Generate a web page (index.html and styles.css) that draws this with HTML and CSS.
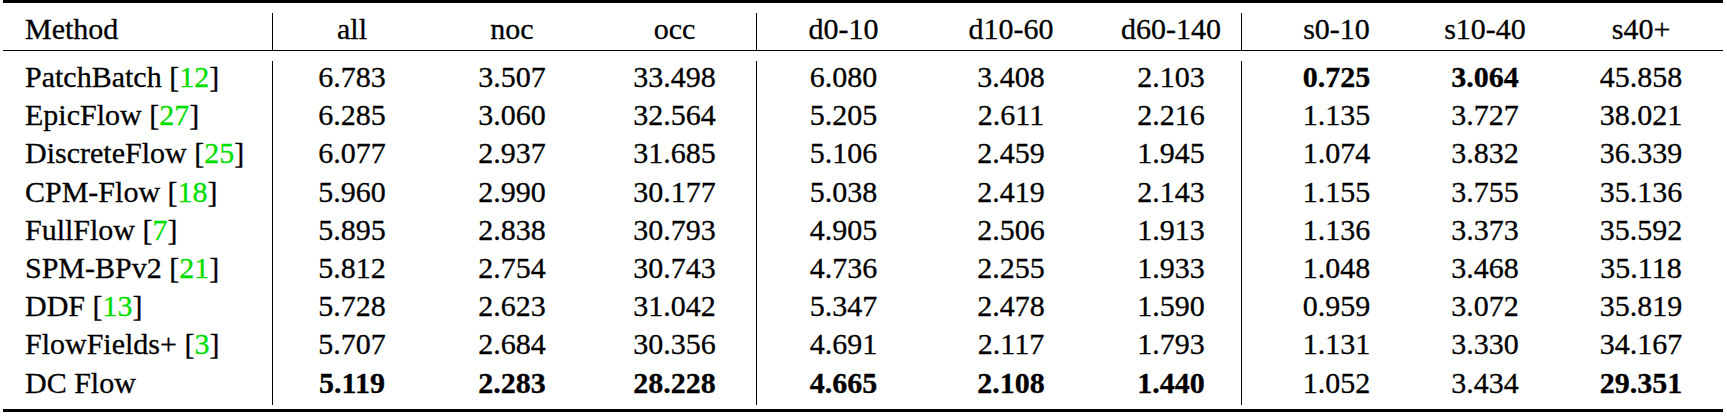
FILE: index.html
```html
<!DOCTYPE html>
<html>
<head>
<meta charset="utf-8">
<link rel="stylesheet" href="styles.css">
</head>
<body>
<div class="tab">
  <div class="head">
    <div class="row hrow">
      <div class="c first">Method</div>
      <div class="c sep">all</div>
      <div class="c">noc</div>
      <div class="c">occ</div>
      <div class="c sep">d0-10</div>
      <div class="c">d10-60</div>
      <div class="c shift1">d60-140</div>
      <div class="c sep shift2">s0-10</div>
      <div class="c">s10-40</div>
      <div class="c">s40+</div>
    </div>
  </div>
  <div class="body">
    <div class="row brow">
      <div class="c first">PatchBatch [<span class="cite">12</span>]</div>
      <div class="c sep">6.783</div><div class="c">3.507</div><div class="c">33.498</div>
      <div class="c sep">6.080</div><div class="c">3.408</div><div class="c shift1">2.103</div>
      <div class="c sep shift2"><b>0.725</b></div><div class="c"><b>3.064</b></div><div class="c">45.858</div>
    </div>
    <div class="row brow">
      <div class="c first">EpicFlow [<span class="cite">27</span>]</div>
      <div class="c sep">6.285</div><div class="c">3.060</div><div class="c">32.564</div>
      <div class="c sep">5.205</div><div class="c">2.611</div><div class="c shift1">2.216</div>
      <div class="c sep shift2">1.135</div><div class="c">3.727</div><div class="c">38.021</div>
    </div>
    <div class="row brow">
      <div class="c first">DiscreteFlow [<span class="cite">25</span>]</div>
      <div class="c sep">6.077</div><div class="c">2.937</div><div class="c">31.685</div>
      <div class="c sep">5.106</div><div class="c">2.459</div><div class="c shift1">1.945</div>
      <div class="c sep shift2">1.074</div><div class="c">3.832</div><div class="c">36.339</div>
    </div>
    <div class="row brow">
      <div class="c first">CPM-Flow [<span class="cite">18</span>]</div>
      <div class="c sep">5.960</div><div class="c">2.990</div><div class="c">30.177</div>
      <div class="c sep">5.038</div><div class="c">2.419</div><div class="c shift1">2.143</div>
      <div class="c sep shift2">1.155</div><div class="c">3.755</div><div class="c">35.136</div>
    </div>
    <div class="row brow">
      <div class="c first">FullFlow [<span class="cite">7</span>]</div>
      <div class="c sep">5.895</div><div class="c">2.838</div><div class="c">30.793</div>
      <div class="c sep">4.905</div><div class="c">2.506</div><div class="c shift1">1.913</div>
      <div class="c sep shift2">1.136</div><div class="c">3.373</div><div class="c">35.592</div>
    </div>
    <div class="row brow">
      <div class="c first">SPM-BPv2 [<span class="cite">21</span>]</div>
      <div class="c sep">5.812</div><div class="c">2.754</div><div class="c">30.743</div>
      <div class="c sep">4.736</div><div class="c">2.255</div><div class="c shift1">1.933</div>
      <div class="c sep shift2">1.048</div><div class="c">3.468</div><div class="c">35.118</div>
    </div>
    <div class="row brow">
      <div class="c first">DDF [<span class="cite">13</span>]</div>
      <div class="c sep">5.728</div><div class="c">2.623</div><div class="c">31.042</div>
      <div class="c sep">5.347</div><div class="c">2.478</div><div class="c shift1">1.590</div>
      <div class="c sep shift2">0.959</div><div class="c">3.072</div><div class="c">35.819</div>
    </div>
    <div class="row brow">
      <div class="c first">FlowFields+ [<span class="cite">3</span>]</div>
      <div class="c sep">5.707</div><div class="c">2.684</div><div class="c">30.356</div>
      <div class="c sep">4.691</div><div class="c">2.117</div><div class="c shift1">1.793</div>
      <div class="c sep shift2">1.131</div><div class="c">3.330</div><div class="c">34.167</div>
    </div>
    <div class="row brow">
      <div class="c first">DC Flow</div>
      <div class="c sep"><b>5.119</b></div><div class="c"><b>2.283</b></div><div class="c"><b>28.228</b></div>
      <div class="c sep"><b>4.665</b></div><div class="c"><b>2.108</b></div><div class="c shift1"><b>1.440</b></div>
      <div class="c sep shift2">1.052</div><div class="c">3.434</div><div class="c"><b>29.351</b></div>
    </div>
  </div>
</div>
</body>
</html>
```
FILE: styles.css
```css
html, body {
  margin: 0;
  padding: 0;
  background: #fff;
}
body {
  font-family: "Liberation Serif", "Times New Roman", serif;
  font-size: 30px;
  color: #000;
  -webkit-text-stroke: 0.3px #000;
}
.tab {
  margin-left: 3px;
  width: 1720px;
  border-top: 3px solid #000;
  border-bottom: 3px solid #000;
}
.head {
  padding-top: 10px;
  border-bottom: 1px solid #000;
}
.body {
  padding-top: 10px;
  padding-bottom: 4px;
}
.row {
  display: grid;
  grid-template-columns: 269px 159px 162px 163px 174px 162px 149px 170px 148px 164px;
}
.c {
  box-sizing: border-box;
  text-align: center;
  white-space: nowrap;
}
.first {
  text-align: left;
  padding-left: 22px;
}
.sep {
  border-left: 1px solid #000;
}
.shift1 {
  padding-left: 9px;
}
.shift2 {
  padding-left: 20px;
}
.hrow .c {
  height: 37px;
  line-height: 32px;
  padding-bottom: 5px;
}
.brow .c {
  height: 38.2px;
  line-height: 31.8px;
  padding-bottom: 6.4px;
}
.cite {
  color: #00dd00;
  -webkit-text-stroke: 0.3px #00dd00;
}
b {
  font-weight: bold;
}
```
